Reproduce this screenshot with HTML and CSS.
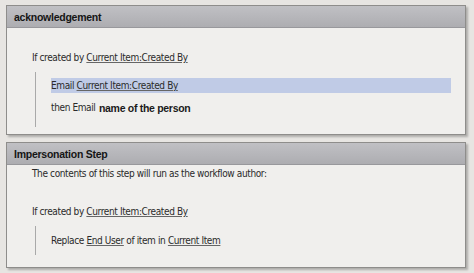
FILE: index.html
```html
<!DOCTYPE html>
<html>
<head>
<meta charset="utf-8">
<link rel="stylesheet" href="styles.css">
</head>
<body>
<div class="page">
  <section class="step step-one">
    <header class="step-head">acknowledgement</header>
    <div class="step-body body-one">
      <div class="line cond">If created by <a class="lnk">Current Item:Created By</a></div>
      <div class="branch">
        <div class="line action selected">Email <a class="lnk">Current Item:Created By</a></div>
        <div class="line action then">then Email <span class="big">name of the person</span></div>
      </div>
    </div>
  </section>
  <section class="step step-two">
    <header class="step-head">Impersonation Step</header>
    <div class="step-body body-two">
      <div class="line intro">The contents of this step will run as the workflow author:</div>
      <div class="line cond cond2">If created by <a class="lnk">Current Item:Created By</a></div>
      <div class="branch branch2">
        <div class="line action">Replace <a class="lnk">End User</a> of item in <a class="lnk">Current Item</a></div>
      </div>
    </div>
  </section>
</div>
</body>
</html>
```
FILE: styles.css
```css
html, body {
  margin: 0;
  padding: 0;
}
body {
  width: 474px;
  height: 273px;
  background: #e7e5e2;
  font-family: "DejaVu Sans Condensed", "Liberation Sans Narrow", "Liberation Sans", sans-serif;
  font-size: 10px;
  letter-spacing: -0.38px;
  color: #2a2a2a;
  overflow: hidden;
}
.page {
  display: flex;
  flex-direction: column;
  gap: 7px;
  padding: 5px 0 0 6px;
}
.step {
  width: 460px;
  background: #f0efed;
  border: 1px solid #8e8d8b;
  box-shadow: 2px 2px 2px rgba(0,0,0,0.25);
  box-sizing: border-box;
}
.step-one { height: 130px; }
.step-two { height: 126px; }
.step-head {
  height: 22px;
  box-sizing: border-box;
  padding: 0 0 0 7px;
  display: flex;
  align-items: center;
  font-family: "Liberation Sans", sans-serif;
  font-weight: bold;
  font-size: 10.5px;
  letter-spacing: -0.25px;
  color: #151515;
  background: linear-gradient(#c0c0c4, #adadb1);
  border-bottom: 1px solid #98989c;
}
.step-body {
  display: flex;
  flex-direction: column;
}
.line {
  height: 15px;
  display: flex;
  align-items: center;
  white-space: pre;
}
.lnk {
  color: #2b2b2b;
  text-decoration: underline;
  text-decoration-color: #666;
}
.cond { margin-left: 25px; }
.body-one { padding-top: 22px; }
.branch {
  margin-left: 28px;
  margin-top: 7px;
  border-left: 1px solid #a9a9a9;
  padding: 6px 0 12px 15px;
  display: flex;
  flex-direction: column;
  gap: 7px;
}
.selected {
  background: #c0cbe6;
  width: 400px;
}
.big {
  font-family: "Liberation Sans", sans-serif;
  font-weight: bold;
  font-size: 10.5px;
  letter-spacing: -0.3px;
  margin-left: 1px;
  color: #1a1a1a;
}
.intro { margin-left: 25px; margin-top: 1px; }
.cond2 { margin-top: 23px; }
.branch2 {
  margin-top: 7px;
  padding: 7px 0 7px 15px;
}
```
